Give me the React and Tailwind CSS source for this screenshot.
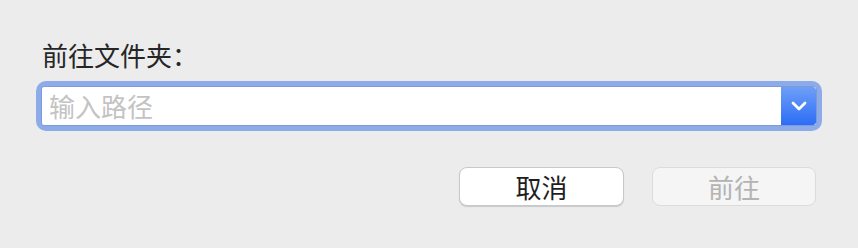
const font = { fontFamily: '"Noto Sans CJK SC", "Noto Sans", sans-serif' };

export default function App() {
  return (
    <div
      className="w-[858px] h-[248px] bg-[#ececec] pt-[42px] pl-[36px] pr-[36px]"
      style={font}
    >
      {/* Label */}
      <div className="ml-[6px] text-[26px] leading-[26px] text-[#262626]">
        前往文件夹：
      </div>

      {/* Path input with focus ring */}
      <div className="mt-[13px] w-[786px] h-[50px] rounded-[10px] bg-[#8dabea] p-[5px]">
        <div className="flex h-[40px] bg-white border border-[#7f9bd6] rounded-[3px] overflow-hidden">
          <div className="flex-1 flex items-center pl-[7px] text-[26px] leading-[26px] text-[#c3c3c3]">
            输入路径
          </div>
          <div className="w-[35px] h-full flex items-center justify-center bg-gradient-to-b from-[#6e9ef7] to-[#2c6cf6] rounded-r-[3px]">
            <svg width="16" height="10" viewBox="0 0 16 10" fill="none">
              <path
                d="M2 2l6 6 6-6"
                stroke="white"
                strokeWidth="2.8"
                strokeLinecap="round"
                strokeLinejoin="round"
              />
            </svg>
          </div>
        </div>
      </div>

      {/* Buttons */}
      <div className="mt-[36px] flex justify-end gap-[28px] pr-[6px]">
        <button className="w-[165px] h-[39px] rounded-[8px] bg-white border border-[#c8c8c8] shadow-[0_1px_1px_rgba(0,0,0,0.15)] text-[26px] leading-[26px] text-[#1e1e1e] flex items-center justify-center">
          取消
        </button>
        <button className="w-[164px] h-[39px] rounded-[8px] bg-[#f5f5f5] border border-[#dcdcdc] text-[26px] leading-[26px] text-[#b3b3b3] flex items-center justify-center">
          前往
        </button>
      </div>
    </div>
  );
}
